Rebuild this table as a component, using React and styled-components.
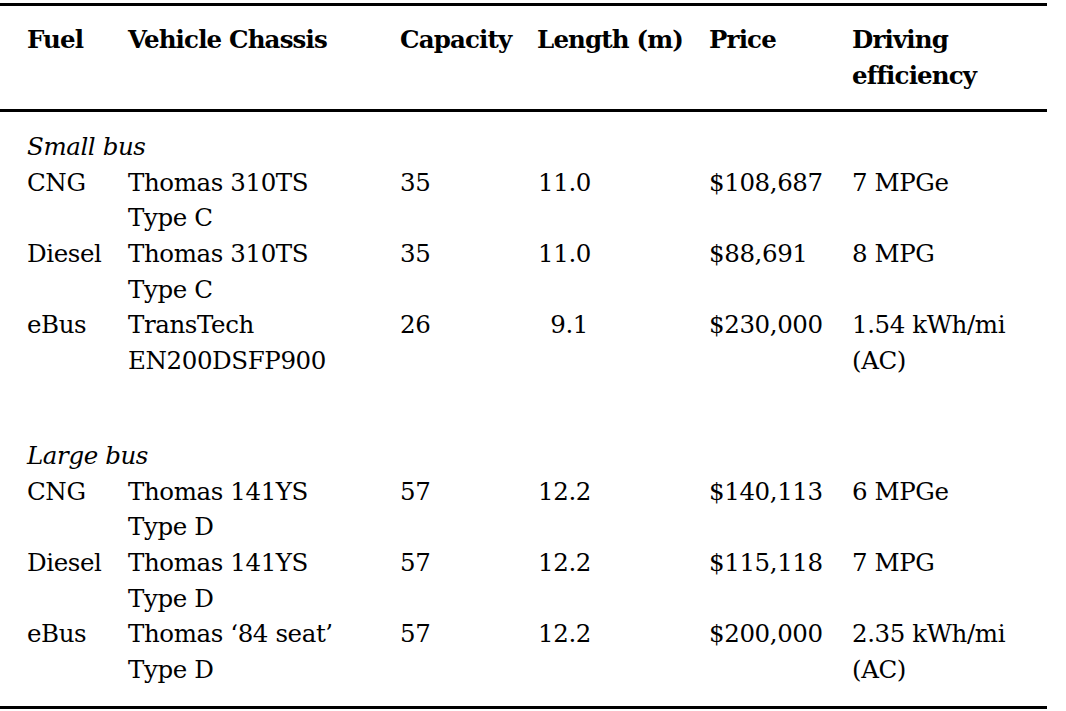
import React from "react";
import styled, { createGlobalStyle } from "styled-components";

const GlobalStyle = createGlobalStyle`
  html, body { margin: 0; padding: 0; background: #fff; }
  body {
    font-family: "DejaVu Serif", "Liberation Serif", serif;
    color: #000;
  }
`;

const Page = styled.div`
  padding-top: 3px;
  width: 1066px;
`;

const Table = styled.table`
  width: 1047px;
  table-layout: fixed;
  border-collapse: separate;
  border-spacing: 0;
  border-top: 3px solid #000;
  border-bottom: 3px solid #000;
  font-size: 24.5px;
  line-height: 35.7px;
  letter-spacing: -0.4px;
`;

const Th = styled.th`
  text-align: left;
  vertical-align: top;
  font-weight: 700;
  letter-spacing: -0.85px;
  padding: 16px 0 15.5px ${(p) => (p.$first ? "27px" : "0")};
  border-bottom: 3px solid #000;
  white-space: nowrap;
`;

const Td = styled.td`
  text-align: left;
  vertical-align: top;
  font-weight: 400;
  white-space: nowrap;
  padding: ${(p) => p.$top || 0}px 0 ${(p) => p.$bottom || 0}px
    ${(p) => (p.$first ? "27px" : "0")};
`;

const GroupLabel = styled.td`
  font-style: italic;
  padding: ${(p) => p.$top || 0}px 0 0 27px;
  white-space: nowrap;
`;

const Decimal = styled.span`
  display: inline-block;
  width: 50px;
  margin-left: 1px;
  text-align: right;
`;

const Line = styled.span`
  display: block;
`;

const widths = [128, 272, 137, 172, 143, 195];

const headers = [
  ["Fuel"],
  ["Vehicle Chassis"],
  ["Capacity"],
  ["Length (m)"],
  ["Price"],
  ["Driving", "efficiency"],
];

const groups = [
  {
    label: "Small bus",
    gap: 17,
    rows: [
      ["CNG", ["Thomas 310TS", "Type C"], "35", "11.0", "$108,687", ["7 MPGe"]],
      ["Diesel", ["Thomas 310TS", "Type C"], "35", "11.0", "$88,691", ["8 MPG"]],
      ["eBus", ["TransTech", "EN200DSFP900"], "26", "9.1", "$230,000", ["1.54 kWh/mi", "(AC)"]],
    ],
  },
  {
    label: "Large bus",
    gap: 59,
    rows: [
      ["CNG", ["Thomas 141YS", "Type D"], "57", "12.2", "$140,113", ["6 MPGe"]],
      ["Diesel", ["Thomas 141YS", "Type D"], "57", "12.2", "$115,118", ["7 MPG"]],
      ["eBus", ["Thomas \u201884 seat\u2019", "Type D"], "57", "12.2", "$200,000", ["2.35 kWh/mi", "(AC)"]],
    ],
  },
];

const Lines = ({ items }) =>
  items.map((t, i) => <Line key={i}>{t}</Line>);

export default function App() {
  return (
    <>
      <GlobalStyle />
      <Page>
        <Table>
          <colgroup>
            {widths.map((w, i) => (
              <col key={i} style={{ width: w }} />
            ))}
          </colgroup>
          <thead>
            <tr>
              {headers.map((h, i) => (
                <Th key={i} $first={i === 0}>
                  <Lines items={h} />
                </Th>
              ))}
            </tr>
          </thead>
          <tbody>
            {groups.map((g, gi) => (
              <React.Fragment key={g.label}>
                <tr>
                  <GroupLabel colSpan={6} $top={g.gap}>
                    {g.label}
                  </GroupLabel>
                </tr>
                {g.rows.map((r, ri) => {
                  const last = gi === groups.length - 1 && ri === g.rows.length - 1;
                  const bottom = last ? 18 : 0;
                  return (
                    <tr key={ri}>
                      <Td $first $bottom={bottom}>{r[0]}</Td>
                      <Td $bottom={bottom}>
                        <Lines items={r[1]} />
                      </Td>
                      <Td $bottom={bottom}>{r[2]}</Td>
                      <Td $bottom={bottom}>
                        <Decimal>{r[3]}</Decimal>
                      </Td>
                      <Td $bottom={bottom}>{r[4]}</Td>
                      <Td $bottom={bottom}>
                        <Lines items={r[5]} />
                      </Td>
                    </tr>
                  );
                })}
              </React.Fragment>
            ))}
          </tbody>
        </Table>
      </Page>
    </>
  );
}
